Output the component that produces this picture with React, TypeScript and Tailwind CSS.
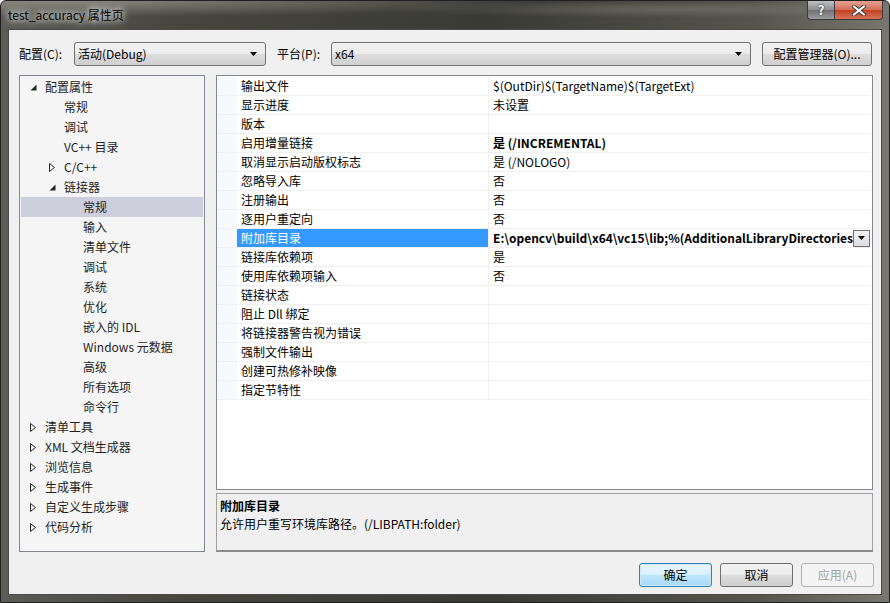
import React from 'react'

const font = "font-['Microsoft_YaHei_UI','Noto_Sans_CJK_SC',sans-serif]"

type TreeItem = { label: string; level: number; toggle?: 'open' | 'closed'; selected?: boolean }

const treeItems: TreeItem[] = [
  { label: '配置属性', level: 0, toggle: 'open' },
  { label: '常规', level: 1 },
  { label: '调试', level: 1 },
  { label: 'VC++ 目录', level: 1 },
  { label: 'C/C++', level: 1, toggle: 'closed' },
  { label: '链接器', level: 1, toggle: 'open' },
  { label: '常规', level: 2, selected: true },
  { label: '输入', level: 2 },
  { label: '清单文件', level: 2 },
  { label: '调试', level: 2 },
  { label: '系统', level: 2 },
  { label: '优化', level: 2 },
  { label: '嵌入的 IDL', level: 2 },
  { label: 'Windows 元数据', level: 2 },
  { label: '高级', level: 2 },
  { label: '所有选项', level: 2 },
  { label: '命令行', level: 2 },
  { label: '清单工具', level: 0, toggle: 'closed' },
  { label: 'XML 文档生成器', level: 0, toggle: 'closed' },
  { label: '浏览信息', level: 0, toggle: 'closed' },
  { label: '生成事件', level: 0, toggle: 'closed' },
  { label: '自定义生成步骤', level: 0, toggle: 'closed' },
  { label: '代码分析', level: 0, toggle: 'closed' },
]

type Row = { name: string; value: string; bold?: boolean; selected?: boolean }

const rows: Row[] = [
  { name: '输出文件', value: '$(OutDir)$(TargetName)$(TargetExt)' },
  { name: '显示进度', value: '未设置' },
  { name: '版本', value: '' },
  { name: '启用增量链接', value: '是 (/INCREMENTAL)', bold: true },
  { name: '取消显示启动版权标志', value: '是 (/NOLOGO)' },
  { name: '忽略导入库', value: '否' },
  { name: '注册输出', value: '否' },
  { name: '逐用户重定向', value: '否' },
  { name: '附加库目录', value: 'E:\\opencv\\build\\x64\\vc15\\lib;%(AdditionalLibraryDirectories)', bold: true, selected: true },
  { name: '链接库依赖项', value: '是' },
  { name: '使用库依赖项输入', value: '否' },
  { name: '链接状态', value: '' },
  { name: '阻止 Dll 绑定', value: '' },
  { name: '将链接器警告视为错误', value: '' },
  { name: '强制文件输出', value: '' },
  { name: '创建可热修补映像', value: '' },
  { name: '指定节特性', value: '' },
]

function Arrow() {
  return (
    <svg width="7" height="4" viewBox="0 0 7 4">
      <path d="M0 0h7L3.5 4z" fill="#000" />
    </svg>
  )
}

function Toggle({ kind }: { kind: 'open' | 'closed' }) {
  if (kind === 'open') {
    return (
      <svg width="7" height="7" viewBox="0 0 7 7">
        <path d="M6.5 0.5V6.5H0.5z" fill="#262626" />
      </svg>
    )
  }
  return (
    <svg width="6" height="9" viewBox="0 0 6 9">
      <path d="M0.5 0.5L5.5 4.5L0.5 8.5z" fill="none" stroke="#262626" />
    </svg>
  )
}

function Combo({ text, width }: { text: string; width: string }) {
  return (
    <div className={`${width} h-[24px] rounded-[3px] border border-[#707070] bg-[linear-gradient(#f2f2f2,#ebebeb_50%,#dddddd_50%,#cfcfcf)] flex items-center pl-[3px] pr-[8px]`}>
      <span className="flex-1 text-[12px] text-black">{text}</span>
      <Arrow />
    </div>
  )
}

function Button({ label, primary, disabled }: { label: string; primary?: boolean; disabled?: boolean }) {
  const base = 'w-[73px] h-[24px] rounded-[3px] border flex items-center justify-center text-[12px]'
  if (disabled) {
    return <div className={`${base} border-[#adb2b5] bg-[#f4f4f4] text-[#a0a0a0]`}>{label}</div>
  }
  if (primary) {
    return (
      <div className={`${base} border-[#3c7fb1] bg-[linear-gradient(#eaf6fd,#d9f0fc_50%,#bee6fd_50%,#a7d9f5)] shadow-[inset_0_0_0_1px_#c8e8fb] text-black`}>
        {label}
      </div>
    )
  }
  return (
    <div className={`${base} border-[#707070] bg-[linear-gradient(#f2f2f2,#ebebeb_50%,#dddddd_50%,#cfcfcf)] text-black`}>{label}</div>
  )
}

export default function App() {
  return (
    <div className={`${font} w-[890px] h-[603px] flex flex-col rounded-t-[6px] bg-[linear-gradient(90deg,#5c5c56,#46463f_20%,#3a3a34_55%,#55554e_85%,#77776f)] border border-[#1f1f1f] overflow-hidden`}>
      <div className="h-[28px] flex items-start relative">
        <div className="absolute inset-0 bg-[radial-gradient(ellipse_at_10%_0%,rgba(200,200,190,0.45),transparent_40%),radial-gradient(ellipse_at_75%_30%,rgba(150,150,140,0.35),transparent_30%)]" />
        <span className="relative ml-[7px] mt-[5px] text-[12px] text-black [text-shadow:0_0_6px_#fff,0_0_8px_#fff]">test_accuracy 属性页</span>
        <div className="relative ml-auto mr-[6px] flex">
          <div className="w-[28px] h-[19px] rounded-bl-[4px] border border-t-0 border-[#3a3a3a] bg-[linear-gradient(#bfc0c0,#8b8d8f_50%,#6e7072_50%,#9a9c9e)] flex items-center justify-center text-white font-bold text-[13px] [text-shadow:0_0_2px_#000]">
            ?
          </div>
          <div className="w-[48px] h-[19px] rounded-br-[4px] border border-l-0 border-t-0 border-[#3a3a3a] bg-[linear-gradient(#e6a393,#d36c54_50%,#c2401f_50%,#d6725a)] flex items-center justify-center">
            <svg width="14" height="11" viewBox="0 0 14 11">
              <path d="M2 1.5L12 9.5M12 1.5L2 9.5" stroke="#3a3a3a" strokeWidth="4" strokeLinecap="square" />
              <path d="M2 1.5L12 9.5M12 1.5L2 9.5" stroke="#fff" strokeWidth="2" strokeLinecap="square" />
            </svg>
          </div>
        </div>
      </div>

      <div className="flex-1 mx-[7px] mb-[7px] border border-[#4a4a4a] bg-[#f0f0f0] flex flex-col pl-[10px] pr-[8px]">
        <div className="flex items-center mt-[12px] h-[24px] text-[12px] text-black">
          <span className="w-[55px]">配置(C):</span>
          <Combo text="活动(Debug)" width="w-[192px]" />
          <span className="ml-[11px] w-[54px]">平台(P):</span>
          <Combo text="x64" width="w-[420px]" />
          <div className="ml-[11px] w-[110px] h-[24px] rounded-[3px] border border-[#707070] bg-[linear-gradient(#f2f2f2,#ebebeb_50%,#dddddd_50%,#cfcfcf)] flex items-center justify-center">
            配置管理器(O)...
          </div>
        </div>

        <div className="flex mt-[9px] h-[477px]">
          <div className="w-[186px] shrink-0 border border-[#828790] bg-[#f5f5f5] pt-[1px] px-[1px] text-[12px] text-[#1e1e1e]">
            {treeItems.map((t, i) => (
              <div key={i} className={`h-[20px] flex items-center ${t.selected ? 'bg-[#cccedb]' : ''}`}>
                <div className="flex items-center" style={{ paddingLeft: 9 + t.level * 19 }}>
                  <span className="w-[7px] flex items-center">{t.toggle && <Toggle kind={t.toggle} />}</span>
                  <span className="ml-[8px]">{t.label}</span>
                </div>
              </div>
            ))}
          </div>

          <div className="ml-[11px] flex-1 min-w-0 flex flex-col">
            <div className="h-[415px] border border-[#828790] bg-white pt-[1px] pr-[2px] text-[12px] text-black">
              {rows.map((r, i) => (
                <div key={i} className="h-[19px] flex border-b border-[#f0f0f0]">
                  <div className="w-[20px] shrink-0 bg-[#f7f9fe]" />
                  <div className={`w-[252px] shrink-0 pl-[4px] flex items-center border-r border-[#f0f0f0] ${r.selected ? 'bg-[#3399ff] text-white' : ''}`}>
                    {r.name}
                  </div>
                  <div className={`flex-1 min-w-0 pl-[4px] flex items-center overflow-hidden whitespace-nowrap ${r.bold ? 'font-bold' : ''}`}>
                    <span className="flex-1 min-w-0 overflow-hidden">{r.value}</span>
                    {r.selected && (
                      <div className="w-[17px] h-[17px] border border-[#707070] bg-[linear-gradient(#f2f2f2,#dcdcdc)] flex items-center justify-center shrink-0">
                        <Arrow />
                      </div>
                    )}
                  </div>
                </div>
              ))}
            </div>
            <div className="mt-[3px] h-[59px] border border-[#a0a0a0] border-b-2 border-b-[#8a8a8a] bg-[#f0f0f0] px-[3px] pt-[3px] text-[12px] text-black">
              <div className="font-bold leading-[18px]">附加库目录</div>
              <div className="leading-[18px]">允许用户重写环境库路径。(/LIBPATH:folder)</div>
            </div>
          </div>
        </div>

        <div className="flex justify-end gap-[8px] mt-[11px] mr-[-1px]">
          <Button label="确定" primary />
          <Button label="取消" />
          <Button label="应用(A)" disabled />
        </div>
      </div>
    </div>
  )
}
